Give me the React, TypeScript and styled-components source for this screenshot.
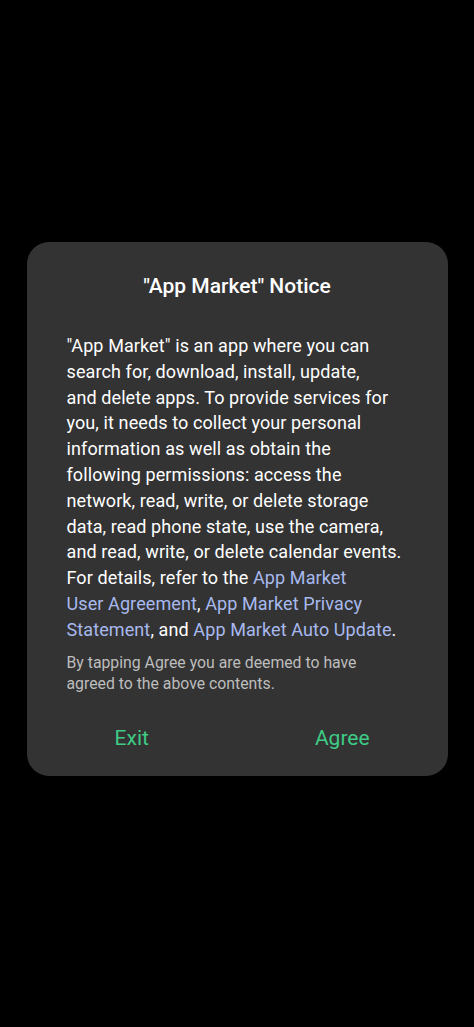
import styled, { createGlobalStyle } from "styled-components";

const GlobalStyle = createGlobalStyle`
  html,
  body {
    margin: 0;
    padding: 0;
    background: #000000;
    font-family: Roboto, "Noto Sans", sans-serif;
  }
  * {
    box-sizing: border-box;
  }
`;

function App() {
  return (
    <>
      <GlobalStyle />
      <Screen>
        <Dialog>
          <Title>"App Market" Notice</Title>
          <Body>
            "App Market" is an app where you can
            <br />
            search for, download, install, update,
            <br />
            and delete apps. To provide services for
            <br />
            you, it needs to collect your personal
            <br />
            information as well as obtain the
            <br />
            following permissions: access the
            <br />
            network, read, write, or delete storage
            <br />
            data, read phone state, use the camera,
            <br />
            and read, write, or delete calendar events.
            <br />
            For details, refer to the <Link>App Market</Link>
            <br />
            <Link>User Agreement</Link>, <Link>App Market Privacy</Link>
            <br />
            <Link>Statement</Link>, and <Link>App Market Auto Update</Link>.
          </Body>
          <Hint>
            By tapping Agree you are deemed to have
            <br />
            agreed to the above contents.
          </Hint>
          <Actions>
            <ActionButton>Exit</ActionButton>
            <ActionButton>Agree</ActionButton>
          </Actions>
        </Dialog>
      </Screen>
    </>
  );
}

export default App;

const Screen = styled.div`
  width: 100%;
  height: 1027px;
  background: #000000;
  display: flex;
  flex-direction: column;
  align-items: center;
  padding-top: 242px;
`;

const Dialog = styled.div`
  width: 421px;
  background: #333333;
  border-radius: 22px;
  padding: 30px 40px 18px 40px;
  display: flex;
  flex-direction: column;
`;

const Title = styled.h2`
  margin: 0 0 33px 0;
  text-align: center;
  color: #ffffff;
  font-size: 21px;
  font-weight: 500;
  line-height: 28px;
`;

const Body = styled.p`
  margin: 0;
  color: #ffffff;
  font-size: 18px;
  line-height: 25.8px;
  letter-spacing: 0.1px;
  white-space: nowrap;
`;

const Link = styled.span`
  color: #a8b9ee;
`;

const Hint = styled.p`
  margin: 9px 0 0 0;
  color: #bdbdbd;
  font-size: 15.8px;
  line-height: 21px;
  white-space: nowrap;
`;

const Actions = styled.div`
  display: grid;
  grid-template-columns: 1fr 1fr;
  margin: 24px -40px 0 -40px;
`;

const ActionButton = styled.button`
  background: none;
  border: none;
  color: #3ecb85;
  font-family: Roboto, "Noto Sans", sans-serif;
  font-size: 21px;
  line-height: 28px;
  padding: 6px 0;
  cursor: pointer;
`;
